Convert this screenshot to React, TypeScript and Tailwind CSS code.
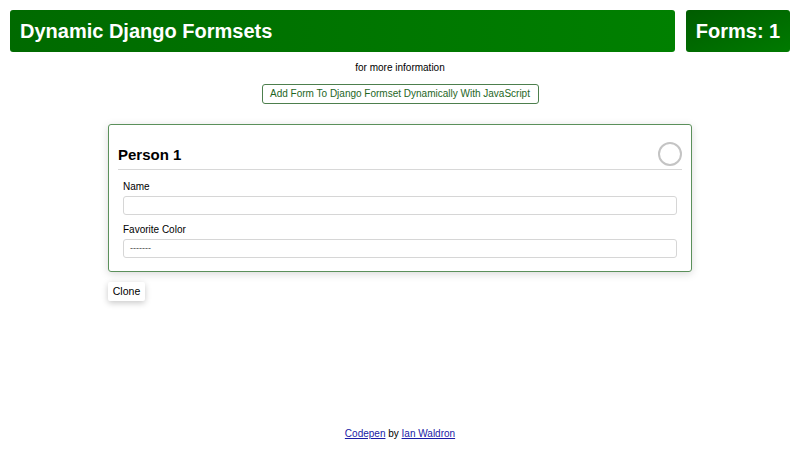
export default function App() {
  return (
    <div className="min-h-[450px] bg-white font-['Liberation_Sans',Arial,sans-serif] text-black flex flex-col">
      {/* Header */}
      <div className="flex gap-[11px] px-[10px] pt-[10px]">
        <div className="flex-1 h-[42px] rounded-[3px] bg-gradient-to-r from-[#006a00] to-[#008000] flex items-center px-[10px]">
          <h1 className="text-[20px] font-bold text-white leading-none">Dynamic Django Formsets</h1>
        </div>
        <div className="w-[104px] h-[42px] rounded-[3px] bg-gradient-to-br from-[#005c00] to-[#007a00] flex items-center justify-center">
          <span className="text-[20px] font-bold text-white leading-none">Forms: 1</span>
        </div>
      </div>

      <p className="text-center text-[10px] mt-[10px] leading-[12px]">for more information</p>

      <div className="flex justify-center mt-[10px]">
        <button className="h-[20px] w-[277px] border border-[#4d7f4d] rounded-[3px] text-[10px] text-[#1e661e] leading-none bg-white">
          Add Form To Django Formset Dynamically With JavaScript
        </button>
      </div>

      {/* Form card */}
      <div className="ml-[108px] mt-[20px] w-[584px] border border-[#5b905b] rounded-[3px] shadow-[0_2px_8px_rgba(0,0,0,0.15)] px-[9px] pt-[17px] pb-[13px]">
        <div className="flex items-center justify-between pb-[3px] border-b border-[#d8d8d8]">
          <h2 className="text-[15px] font-bold leading-none">Person 1</h2>
          <div className="w-[24px] h-[24px] rounded-full border-2 border-[#c4c4c4]" />
        </div>
        <div className="px-[5px] pt-[11px]">
          <label className="block text-[10px] leading-[12px]">Name</label>
          <div className="mt-[3px] h-[19px] border border-[#d6d6d6] rounded-[3px] bg-white" />
          <label className="block text-[10px] leading-[12px] mt-[9px]">Favorite Color</label>
          <div className="mt-[3px] h-[19px] border border-[#d6d6d6] rounded-[3px] bg-white flex items-center px-[6px]">
            <span className="text-[9px] leading-none text-[#444]">-------</span>
          </div>
        </div>
      </div>

      <div className="flex ml-[108px] mt-[10px]">
        <button className="h-[19px] w-[37px] text-[10.5px] leading-none bg-white rounded-[2px] shadow-[0_2px_6px_rgba(0,0,0,0.22)]">
          Clone
        </button>
      </div>

      <footer className="mt-auto pb-[10px] text-center text-[10px] leading-[12px]">
        <a href="#" className="underline text-[#1a1aa6]">Codepen</a> by{" "}
        <a href="#" className="underline text-[#1a1aa6]">Ian Waldron</a>
      </footer>
    </div>
  );
}
